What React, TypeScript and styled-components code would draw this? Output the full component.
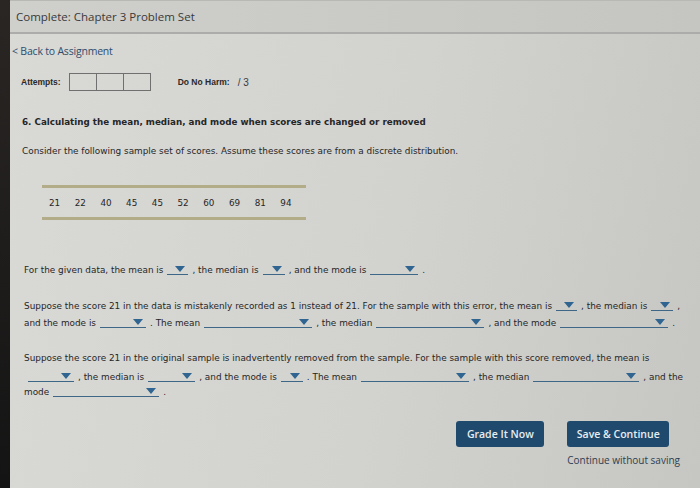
import React from "react";
import styled, { createGlobalStyle } from "styled-components";

const GlobalStyle = createGlobalStyle`
  html, body {
    margin: 0;
    padding: 0;
    background: #1a1a1a;
  }
  body {
    font-family: "DejaVu Sans", Verdana, sans-serif;
  }
`;

const Screen = styled.div`
  width: 700px;
  height: 488px;
  display: flex;
  overflow: hidden;
`;

const Bezel = styled.div`
  width: 10px;
  flex: none;
  background: linear-gradient(180deg, #2a2624 0%, #141414 100%);
`;

const Page = styled.div`
  flex: 1;
  display: flex;
  flex-direction: column;
  background: linear-gradient(100deg, #d9d9d6 0%, #d2d2cf 55%, #c6c6c3 100%);
  color: #262626;
`;

const Header = styled.div`
  height: 31px;
  display: flex;
  align-items: center;
  padding-left: 6px;
  background: linear-gradient(90deg, #cfcfcc 0%, #c5c5c2 100%);
  border-top: 1px solid #b8b8b5;
  border-bottom: 2px solid #acacaa;
  font-family: "Open Sans", sans-serif;
  font-size: 11.5px;
  color: #3a3a3a;
`;

const Body = styled.div`
  display: flex;
  flex-direction: column;
  padding: 10px 0 0 2px;
`;

const BackLink = styled.a`
  font-family: "Open Sans", sans-serif;
  font-size: 10.5px;
  color: #2f4d6c;
  text-decoration: none;
  letter-spacing: -0.2px;
`;

const AttemptsRow = styled.div`
  display: flex;
  align-items: center;
  margin: 15px 0 0 9px;
  font-family: "Liberation Sans", Arial, sans-serif;
  font-size: 8.5px;
  font-weight: bold;
  color: #2a2a2a;
`;

const Boxes = styled.div`
  display: flex;
  margin-left: 8px;
  border: 1px solid #707070;
`;

const Box = styled.div`
  width: 26px;
  height: 16px;
  & + & {
    border-left: 1px solid #707070;
  }
`;

const HarmLabel = styled.span`
  margin-left: 27px;
`;

const HarmValue = styled.span`
  margin-left: 8px;
  font-weight: normal;
  font-size: 10px;
  color: #3a3a3a;
`;

const Question = styled.div`
  display: flex;
  flex-direction: column;
  padding-left: 10px;
  font-size: 8.9px;
`;

const Title = styled.div`
  margin-top: 26px;
  font-weight: bold;
  font-size: 8.75px;
  color: #262626;
`;

const Intro = styled.div`
  margin-top: 19px;
`;

const ScoreTable = styled.div`
  margin: 29px 0 0 20px;
  width: 264px;
  border-top: 3px solid #b3ac88;
  border-bottom: 3px solid #b3ac88;
  display: flex;
  padding: 10px 0 9px 7px;
  box-sizing: border-box;
`;

const Score = styled.span`
  width: 26.4px;
  font-size: 8.8px;
`;

const Para = styled.div<{ $top: number }>`
  margin-top: ${({ $top }) => $top}px;
  display: flex;
  flex-direction: column;
`;

const Line = styled.div<{ $gap?: number }>`
  display: flex;
  align-items: flex-end;
  height: 17px;
  white-space: pre;
  margin-top: ${({ $gap }) => $gap ?? 0}px;
  padding-left: 2px;
`;

const Select = styled.span<{ $w: number }>`
  display: inline-flex;
  justify-content: flex-end;
  align-items: center;
  width: ${({ $w }) => $w}px;
  height: 11px;
  margin: 0 4px 0 4px;
  border-bottom: 1px solid #3d6687;
  box-sizing: border-box;
  padding-right: 3px;
`;

const Caret = styled.span`
  width: 0;
  height: 0;
  border-left: 5px solid transparent;
  border-right: 5px solid transparent;
  border-top: 6px solid #2f6590;
`;

const Footer = styled.div`
  display: flex;
  justify-content: flex-end;
  gap: 23px;
  margin: 24px 20px 0 0;
`;

const Action = styled.div`
  display: flex;
  flex-direction: column;
  align-items: flex-start;
  gap: 6px;
`;

const Button = styled.button<{ $w: number }>`
  width: ${({ $w }) => $w}px;
  height: 26px;
  border: none;
  border-radius: 3px;
  background: #1f4a6d;
  color: #e8edf1;
  font-family: "Open Sans", sans-serif;
  font-size: 10.5px;
  font-weight: 600;
  padding: 0;
`;

const SkipLink = styled.span`
  font-family: "Open Sans", sans-serif;
  font-size: 10px;
  color: #2e3e50;
`;

const Dd = ({ w }: { w: number }) => (
  <Select $w={w}>
    <Caret />
  </Select>
);

const scores = [21, 22, 40, 45, 45, 52, 60, 69, 81, 94];

export default function App() {
  return (
    <Screen>
      <GlobalStyle />
      <Bezel />
      <Page>
        <Header>Complete: Chapter 3 Problem Set</Header>
        <Body>
          <BackLink>&lt; Back to Assignment</BackLink>
          <AttemptsRow>
            Attempts:
            <Boxes>
              <Box />
              <Box />
              <Box />
            </Boxes>
            <HarmLabel>Do No Harm:</HarmLabel>
            <HarmValue>/ 3</HarmValue>
          </AttemptsRow>
          <Question>
            <Title>
              6. Calculating the mean, median, and mode when scores are changed or removed
            </Title>
            <Intro>
              Consider the following sample set of scores. Assume these scores are from a
              discrete distribution.
            </Intro>
            <ScoreTable>
              {scores.map((s, i) => (
                <Score key={i}>{s}</Score>
              ))}
            </ScoreTable>

            <Para $top={38}>
              <Line>
                For the given data, the mean is<Dd w={21} />, the median is<Dd w={22} />, and
                the mode is<Dd w={48} />.
              </Line>
            </Para>

            <Para $top={19}>
              <Line>
                Suppose the score 21 in the data is mistakenly recorded as 1 instead of 21. For
                the sample with this error, the mean is<Dd w={21} />, the median is
                <Dd w={22} />,
              </Line>
              <Line>
                and the mode is<Dd w={46} />. The mean<Dd w={108} />, the median
                <Dd w={108} />, and the mode<Dd w={108} />.
              </Line>
            </Para>

            <Para $top={18}>
              <Line>
                Suppose the score 21 in the original sample is inadvertently removed from the
                sample. For the sample with this score removed, the mean is
              </Line>
              <Line $gap={2}>
                <Dd w={46} />, the median is<Dd w={47} />, and the mode is<Dd w={22} />. The
                mean<Dd w={108} />, the median<Dd w={106} />, and the
              </Line>
              <Line $gap={-2}>
                mode<Dd w={106} />.
              </Line>
            </Para>
          </Question>
          <Footer>
            <Action>
              <Button $w={88}>Grade It Now</Button>
            </Action>
            <Action>
              <Button $w={102}>Save &amp; Continue</Button>
              <SkipLink>Continue without saving</SkipLink>
            </Action>
          </Footer>
        </Body>
      </Page>
    </Screen>
  );
}
